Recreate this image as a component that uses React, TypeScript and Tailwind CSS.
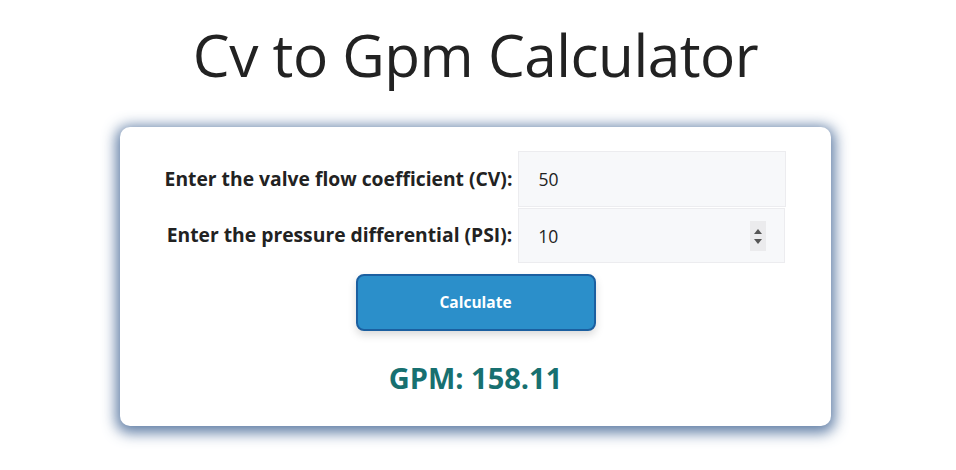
import { useState } from 'react';

export default function App() {
  const [cv, setCv] = useState('50');
  const [psi, setPsi] = useState('10');
  const [gpm, setGpm] = useState('158.11');

  const calculate = () => {
    const c = parseFloat(cv);
    const p = parseFloat(psi);
    if (!isNaN(c) && !isNaN(p)) setGpm((c * Math.sqrt(p)).toFixed(2));
  };

  return (
    <div className="min-h-[470px] w-[951px] bg-white font-['Open_Sans',sans-serif] text-[#222]">
      {/* Title */}
      <h1 className="pt-[14px] text-center text-[58.5px] font-normal leading-[80px] tracking-[-0.5px]">
        Cv to Gpm Calculator
      </h1>

      {/* Card */}
      <div className="mx-auto mt-[33px] w-[711px] rounded-[10px] bg-white px-6 pb-[28px] pt-6 shadow-[0_3px_14px_4px_rgba(70,105,150,0.85)]">
        <div className="flex items-center justify-center gap-[6px]">
          <label className="whitespace-nowrap text-[19.3px] font-bold">Enter the valve flow coefficient (CV):</label>
          <input
            value={cv}
            onChange={e => setCv(e.target.value)}
            className="h-[56px] w-[268px] shrink-0 border border-[#ececef] bg-[#f7f8fa] px-[19px] text-[17.5px] outline-none"
          />
        </div>
        <div className="mt-px flex items-center justify-center gap-[6px] pl-px">
          <label className="whitespace-nowrap text-[19.3px] font-bold">Enter the pressure differential (PSI):</label>
          <div className="relative shrink-0">
            <input
              value={psi}
              onChange={e => setPsi(e.target.value)}
              className="h-[55px] w-[267px] border border-[#ececef] bg-[#f7f8fa] px-[19px] text-[17.5px] outline-none"
            />
            <div className="absolute right-[19px] top-[13px] flex h-[30px] w-[16px] flex-col items-center justify-center gap-[5px] bg-[#ebebed]">
              <svg width="8" height="5" viewBox="0 0 8 5"><path d="M4 0L8 5H0z" fill="#555" /></svg>
              <svg width="8" height="5" viewBox="0 0 8 5"><path d="M0 0H8L4 5z" fill="#555" /></svg>
            </div>
          </div>
        </div>

        <div className="mt-[11px] flex justify-center">
          <button
            type="button"
            onClick={calculate}
            className="h-[57px] w-[240px] rounded-[8px] border-2 border-[#1b5fa0] bg-[#2b8fca] text-[15.5px] font-bold text-white shadow-[0_4px_8px_rgba(0,0,0,0.15)]"
          >
            Calculate
          </button>
        </div>

        <p className="mt-[27px] text-center text-[29px] font-bold leading-[40px] text-[#177070]">GPM: {gpm}</p>
      </div>
    </div>
  );
}
